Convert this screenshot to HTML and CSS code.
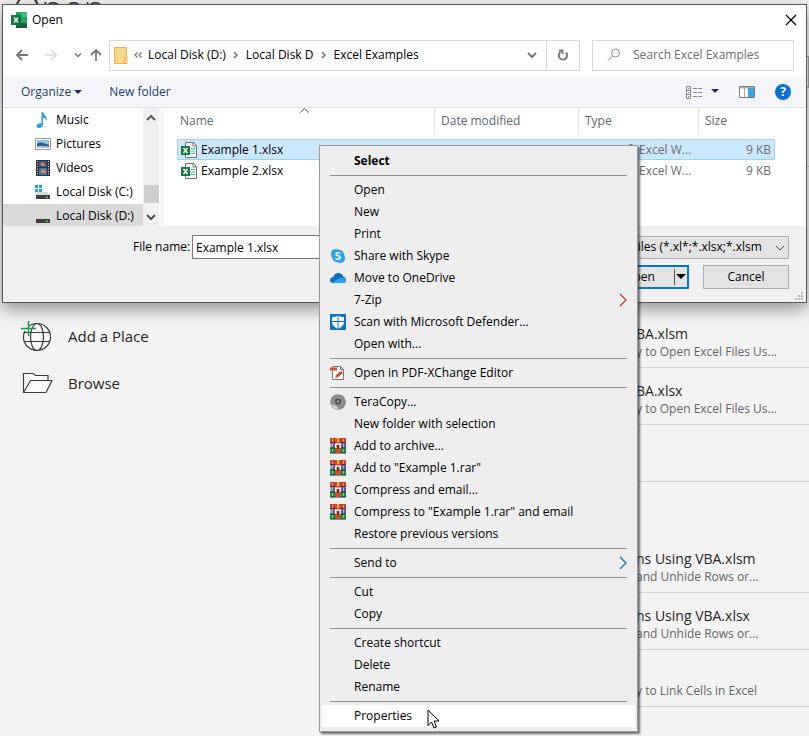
FILE: index.html
```
<!DOCTYPE html>
<html lang="en">
<head>
<meta charset="utf-8">
<title>Open</title>
<link rel="stylesheet" href="styles.css">
</head>
<body>
<svg class="sprite" aria-hidden="true">
  <symbol id="i-excel-file" viewBox="0 0 16 16">
    <path d="M4.500.500h8l3 3v12h-11z" fill="#fff" stroke="#707070"/>
    <path d="M12 .5V4h3.500" fill="none" stroke="#707070"/>
    <path d="M10 6.500h4M10 9h4M10 11.500h4" stroke="#33c481"/>
    <path d="M0 4h9v9H0z" fill="#107c41"/>
    <path d="M2.500 6l4 5M6.500 6l-4 5" stroke="#fff" stroke-width="1.500"/>
  </symbol>
  <symbol id="i-rar" viewBox="0 0 16 16">
    <path d="M0 0h16v4H0z" fill="#c8402c"/>
    <path d="M0 4h16v1.500H0z" fill="#6b1b4c"/>
    <path d="M1 5.500h15V10H1z" fill="#4763b8"/>
    <path d="M0 5.500h1.500V10H0z" fill="#a9b6e0"/>
    <path d="M0 10h16v5H0z" fill="#199048"/>
    <path d="M0 9.500h16v1H0zM0 14.500h16v1H0z" fill="#163a33"/>
    <path d="M2 1h1v3H2zM13 1h1v3h-1zM2 6h1v3H2zM13 6h1v3h-1zM2 11h1v3H2zM13 11h1v3h-1z" fill="#e0b24c"/>
    <path d="M5.500 0h5v15h-5z" fill="#d34a2c"/>
    <path d="M7 0h2v4H7z" fill="#efb540"/>
    <path d="M5 5.500h6V10H9.500V7h-3v3H5z" fill="#f4f1ea"/>
    <path d="M7 7h2v4H7z" fill="#8d2418"/>
  </symbol>
  <symbol id="i-disk" viewBox="0 0 16 16">
    <path d="M3 8h10l2 3H1z" fill="#d6d6d6"/>
    <path d="M1 11h14v4H1z" fill="#3f3f3f"/>
    <path d="M11 12.500h2v1.500h-2z" fill="#3be05a"/>
  </symbol>
  <symbol id="i-more" viewBox="0 0 8 14">
    <path d="M1 1l6 6-6 6" fill="none" stroke="currentColor" stroke-width="1.200"/>
  </symbol>
  <symbol id="i-crumb" viewBox="0 0 6 8">
    <path d="M1 1l3 3-3 3" fill="none" stroke="#707070" stroke-width="1.500"/>
  </symbol>
  <symbol id="i-down" viewBox="0 0 10 8">
    <path d="M1 2l4 4 4-4" fill="none" stroke="currentColor" stroke-width="2"/>
  </symbol>
</svg>

<main class="backstage">
  <section class="places">
    <h1>Open</h1>
    <div class="account-mark"></div>
    <button class="place">
      <svg width="32" height="32" viewBox="0 0 32 32" fill="none" stroke="#3a3a3a" stroke-width="1.200">
        <circle cx="16" cy="17" r="13.500" fill="#fafafa"/>
        <ellipse cx="16" cy="17" rx="6.500" ry="13.500"/>
        <path d="M3.500 12.500h25M3.500 21.500h25"/>
        <path d="M0 4h8v7H0z" fill="#f3f3f3" stroke="none"/>
        <path d="M0 8.500h15M7.500 1v15" stroke="#169a4b" stroke-width="1.500"/>
      </svg>
      <span>Add a Place</span>
    </button>
    <button class="place">
      <svg width="32" height="32" viewBox="0 0 32 32" fill="#fafafa" stroke="#3a3a3a" stroke-width="1.200">
        <path d="M2.500 25V6.500h10l2 2H27v5"/>
        <path d="M2.500 25.500l7-12H31l-6 12z"/>
      </svg>
      <span>Browse</span>
    </button>
  </section>
  <section class="recent">
    <div class="recent-search"></div>
    <div class="recent-head"></div>
    <ul>
      <li><b>BA.xlsm</b><small>y to Open Excel Files Us...</small></li>
      <li><b>BA.xlsx</b><small>y to Open Excel Files Us...</small></li>
      <li></li>
    </ul>
    <ul>
      <li><b>ns Using VBA.xlsm</b><small>and Unhide Rows or...</small></li>
      <li><b>ns Using VBA.xlsx</b><small>and Unhide Rows or...</small></li>
      <li><b></b><small>y to Link Cells in Excel</small></li>
    </ul>
  </section>
</main>

<div class="dialog" role="dialog" aria-label="Open">
  <header class="titlebar">
    <svg width="16" height="16" viewBox="0 0 16 16">
      <path d="M5 0h11v16H5z" fill="#21a366"/>
      <path d="M10 0h6v5h-6z" fill="#33c481"/>
      <path d="M5 5h5v6H5z" fill="#107c41"/>
      <path d="M5 11h11v5H5z" fill="#185c37"/>
      <path d="M0 3h10v10H0z" fill="#0f7a3f"/>
      <path d="M3 5.500l4 5M7 5.500l-4 5" stroke="#fff" stroke-width="1.500"/>
    </svg>
    <span>Open</span>
    <button class="close" aria-label="Close">
      <svg width="12" height="12" viewBox="0 0 12 12"><path d="M1 1l10 10M11 1L1 11" stroke="#000" stroke-width="1.200"/></svg>
    </button>
  </header>

  <nav class="navrow">
    <button class="nav-icon" aria-label="Back"><svg width="14" height="12" viewBox="0 0 14 12" fill="none" stroke="#777" stroke-width="1.800"><path d="M13 6H2M7 1L2 6l5 5"/></svg></button>
    <button class="nav-icon" aria-label="Forward"><svg width="14" height="12" viewBox="0 0 14 12" fill="none" stroke="#d8d8d8" stroke-width="1.600"><path d="M1 6h11M7 1l5 5-5 5"/></svg></button>
    <button class="nav-icon small" aria-label="Recent locations"><svg width="8" height="6"><use href="#i-down"/></svg></button>
    <button class="nav-icon up" aria-label="Up"><svg width="12" height="14" viewBox="0 0 12 14" fill="none" stroke="#777" stroke-width="1.800"><path d="M6 13V2M1 7l5-5 5 5"/></svg></button>
    <div class="address">
      <svg width="14" height="17" viewBox="0 0 14 17"><path d="M.5.500h12v16H.5z" fill="#f6d98b" stroke="#e9b04d"/><path d="M10.500 10.500h2.500v6h-2.500z" fill="#fbe6ae" stroke="#e9a83d"/></svg>
      <svg class="rewind" width="8" height="6" viewBox="0 0 8 6" fill="none" stroke="#707070" stroke-width="1.200"><path d="M3.500.500L1 3l2.500 2.500M7.500.500L5 3l2.500 2.500"/></svg>
      <a href="#">Local Disk (D:)</a>
      <svg width="6" height="8"><use href="#i-crumb"/></svg>
      <a href="#">Local Disk D</a>
      <svg width="6" height="8"><use href="#i-crumb"/></svg>
      <a href="#">Excel Examples</a>
      <button class="history" aria-label="Previous locations"><svg width="10" height="8"><use href="#i-down"/></svg></button>
      <button class="refresh" aria-label="Refresh"><svg width="12" height="12" viewBox="0 0 12 12" fill="none" stroke="#777" stroke-width="1.900"><path d="M9 3.500A4.200 4.200 0 1 1 3.500 3M2 1.500h3.500V5"/></svg></button>
    </div>
    <label class="search">
      <svg width="14" height="14" viewBox="0 0 14 14" fill="none" stroke="#8a8a8a"><circle cx="8.500" cy="5" r="4"/><path d="M5.500 8L1 12.500"/></svg>
      <input type="text" placeholder="Search Excel Examples" aria-label="Search Excel Examples">
    </label>
  </nav>

  <div class="toolbar">
    <button>Organize <i class="tri"></i></button>
    <button>New folder</button>
    <div class="tools">
      <button aria-label="View">
        <svg width="17" height="13" viewBox="0 0 17 13" fill="none" stroke="#8a8a8a"><path d="M.5.500h4v12h-4zM.5 4.500h4M.5 8.500h4"/><path d="M7 2.500h4M12 2.500h4M7 6.500h4M12 6.500h4M7 10.500h4M12 10.500h4"/><path d="M2 2.500h1M2 6.500h1" stroke="#3b82c4"/><path d="M2 10.500h1" stroke="#d0442c"/></svg>
        <i class="tri"></i>
      </button>
      <button aria-label="Preview pane">
        <svg width="16" height="12" viewBox="0 0 16 12"><path d="M.5.500h15v11H.5z" fill="#fff" stroke="#7b7f86"/><path d="M1 1h14v1.500H1z" fill="#a9adb3"/><path d="M9 2h6v9H9z" fill="#39a5e8"/><path d="M5.500 2v9" stroke="#a9adb3"/></svg>
      </button>
      <button aria-label="Help" class="help">?</button>
    </div>
  </div>

  <div class="browser">
    <ul class="tree">
      <li><svg width="16" height="16" viewBox="0 0 16 16"><path d="M6.500 0H8c.5 3 4.500 4 4 9-1-2.500-2-3-4-3.500v7c0 2-2 3.500-4 3.500s-3-1-2.500-2.500 3-2.500 5-2z" fill="#2b9be0"/></svg>Music</li>
      <li><svg width="16" height="16" viewBox="0 0 16 16"><path d="M.5 2.500h15v11H.5z" fill="#fff" stroke="#9a9a9a"/><path d="M2 4h12v8H2z" fill="#8cc3ee"/><path d="M2 8c3-3 6-1 12 1v3H2z" fill="#2d5f94"/><path d="M2 10.500c4-1 8 0 12 0V12H2z" fill="#b9cad6"/></svg>Pictures</li>
      <li><svg width="16" height="16" viewBox="0 0 16 16"><path d="M1 0h14v16H1z" fill="#333"/><path d="M4 1h8v6H4z" fill="#2b58a8"/><path d="M4 8h8v7H4z" fill="#3e75ca"/><path d="M5 4l3-2 3 4H7zM6 10l4-1 1 4H6z" fill="#d98b3a"/><path d="M2.500 1v14M13.500 1v14" stroke="#ddd" stroke-dasharray="1 1.500"/></svg>Videos</li>
      <li><svg width="16" height="16" viewBox="0 0 16 16"><use href="#i-disk"/><path d="M0 1h3v3H0zM4 1h3v3H4zM0 5h3v3H0zM4 5h3v3H4z" fill="#1c9fe6"/></svg>Local Disk (C:)</li>
      <li class="current"><svg width="16" height="16"><use href="#i-disk"/></svg>Local Disk (D:)</li>
    </ul>
    <div class="scroll">
      <svg width="10" height="8" viewBox="0 0 10 8"><path d="M1 6l4-4 4 4" fill="none" stroke="#505050" stroke-width="1.800"/></svg>
      <div class="thumb"></div>
      <svg width="10" height="8"><use href="#i-down"/></svg>
    </div>
    <div class="files">
      <table>
        <thead>
          <tr><th class="c-name">Name<svg class="sort" width="9" height="5" viewBox="0 0 9 5"><path d="M.5 4.500l4-4 4 4" fill="none" stroke="#606060"/></svg></th><th class="c-date">Date modified</th><th class="c-type">Type</th><th class="c-size">Size</th></tr>
        </thead>
        <tbody>
          <tr class="selected"><td><span class="file"><svg width="16" height="16"><use href="#i-excel-file"/></svg>Example 1.xlsx</span></td><td></td><td>Microsoft Excel W...</td><td>9 KB</td></tr>
          <tr><td><span class="file"><svg width="16" height="16"><use href="#i-excel-file"/></svg>Example 2.xlsx</span></td><td></td><td>Microsoft Excel W...</td><td>9 KB</td></tr>
        </tbody>
      </table>
    </div>
  </div>

  <footer class="foot">
    <div class="foot-row">
      <label for="fname">File name:</label>
      <input id="fname" type="text" value="Example 1.xlsx">
      <div class="filter">
        <select aria-label="File type"><option>Excel Files (*.xl*;*.xlsx;*.xlsm</option></select>
        <svg width="10" height="8" viewBox="0 0 10 8"><path d="M1 2l4 4 4-4" fill="none" stroke="#505050"/></svg>
      </div>
    </div>
    <div class="foot-row actions">
      <div class="split"><button>Open</button><button class="drop" aria-label="Open options"><i class="tri"></i></button></div>
      <button class="cancel">Cancel</button>
    </div>
    <svg class="grip" width="8" height="8" viewBox="0 0 8 8" fill="#b8b8b8"><path d="M6 0h2v2H6zM3 3h2v2H3zM6 3h2v2H6zM0 6h2v2H0zM3 6h2v2H3zM6 6h2v2H6z"/></svg>
  </footer>
</div>

<div class="menu" role="menu">
  <button class="default">Select</button>
  <hr>
  <button>Open</button>
  <button>New</button>
  <button>Print</button>
  <button><svg width="16" height="16" viewBox="0 0 16 16"><circle cx="5.500" cy="5.500" r="4.500" fill="#2ea3ea"/><circle cx="10.500" cy="10.500" r="4.500" fill="#2ea3ea"/><circle cx="8" cy="8" r="6.500" fill="#2ea3ea"/><path d="M10.200 5.800C9.500 4.300 6 4.300 6 6.200c0 2 4.200 1.200 4.200 3.400 0 2-3.700 2-4.500.400" fill="none" stroke="#fff" stroke-width="1.500"/></svg>Share with Skype</button>
  <button><svg width="16" height="16" viewBox="0 0 16 16"><path d="M0 10.500C0 8.500 1.500 7 3.300 7 4 4.500 6 3 8.500 3s4 1.500 4.500 3.500c2 .5 3 2 3 3.500 0 2-1.500 3-3 3H3c-1.500 0-3-1-3-2.500z" fill="#0f6cc4"/><path d="M2 13c1-1 6-4.500 8-5 3-.5 6 .5 6 2.500s-1.500 2.500-3 2.500z" fill="#2aa0ea"/></svg>Move to OneDrive</button>
  <button>7-Zip<svg class="more red" width="8" height="14"><use href="#i-more"/></svg></button>
  <button><svg width="16" height="16" viewBox="0 0 16 16"><path d="M0 0h16v16H0z" fill="#0b72d0"/><path d="M8 1.500c2 1.300 4 1.700 6 1.700V8c0 3-3 5.500-6 7-3-1.500-6-4-6-7V3.200c2 0 4-.4 6-1.700z" fill="#fff"/><path d="M8 1v14M2 7.500h12" stroke="#0b72d0"/></svg>Scan with Microsoft Defender...</button>
  <button>Open with...</button>
  <hr>
  <button><svg width="16" height="16" viewBox="0 0 16 16"><path d="M2.500 1.500h8l3 3v10h-11z" fill="#fff" stroke="#777"/><path d="M10.500 1.500v3h3" fill="none" stroke="#777"/><path d="M0 2.500h7v3H0z" fill="#d9482b"/><path d="M5 13l1-3 5-4 2 2-5 4z" fill="#d9482b"/></svg>Open in PDF-XChange Editor</button>
  <hr>
  <button><svg width="16" height="16" viewBox="0 0 16 16"><circle cx="8" cy="8" r="7.800" fill="#858585"/><circle cx="8" cy="7.500" r="5" fill="none" stroke="#a0a0a0"/><circle cx="8" cy="7.500" r="2.800" fill="#4a4a4a"/><circle cx="8" cy="7.500" r="1.200" fill="#aaa"/><path d="M1 10c1 4 5 5.500 8 5l-3-3z" fill="#d0d0d0"/></svg>TeraCopy...</button>
  <button>New folder with selection</button>
  <button><svg width="16" height="16"><use href="#i-rar"/></svg>Add to archive...</button>
  <button><svg width="16" height="16"><use href="#i-rar"/></svg>Add to "Example 1.rar"</button>
  <button><svg width="16" height="16"><use href="#i-rar"/></svg>Compress and email...</button>
  <button><svg width="16" height="16"><use href="#i-rar"/></svg>Compress to "Example 1.rar" and email</button>
  <button>Restore previous versions</button>
  <hr>
  <button>Send to<svg class="more blue" width="8" height="14"><use href="#i-more"/></svg></button>
  <hr>
  <button>Cut</button>
  <button>Copy</button>
  <hr>
  <button>Create shortcut</button>
  <button>Delete</button>
  <button>Rename</button>
  <hr>
  <button class="hover">Properties</button>
  <svg class="cursor" width="13" height="20" viewBox="0 0 13 20"><path d="M1 1v15.500l3.500-3.500 2.500 6 2.500-1-2.500-6H12z" fill="#fff" stroke="#000"/></svg>
</div>
</body>
</html>
```
FILE: styles.css
```
* { box-sizing: border-box; }
body {
  margin: 0;
  height: 100vh;
  overflow: hidden;
  position: relative;
  background: #f3f3f3;
  color: #000;
  font: 12px/16px "Open Sans", "Noto Sans", sans-serif;
}
button, input, select { font: inherit; color: inherit; }
button { border: 0; padding: 0; background: none; text-align: left; }
svg { flex: none; display: block; }
ul { list-style: none; margin: 0; padding: 0; }
a { color: inherit; text-decoration: none; }
.sprite { position: absolute; width: 0; height: 0; }
.tri { display: inline-block; border: 4px solid transparent; border-top: 4px solid #1e2a6b; border-bottom: 0; }

/* Backstage page */
.backstage { display: flex; height: 100%; overflow: hidden; }
.places { width: 600px; flex: none; }
.places h1 { margin: -16px 0 0 13px; height: 48px; font-size: 37px; line-height: 48px; font-weight: 300; color: #333; }
.account-mark { margin: 262px 0 0 37px; width: 9px; height: 8px; background: #2b3192; }
.place { display: flex; align-items: center; gap: 15px; height: 47px; padding-left: 21px; font-size: 15px; color: #262626; }
.account-mark + .place { margin-top: 10px; }
.recent { flex: 1; }
.recent-search { margin-top: 56px; height: 32px; border: 1px solid #a8a8a8; }
.recent-head { height: 79px; border-bottom: 1px solid #c8c8c8; }
.recent ul { padding-top: 54px; }
.recent-head + ul { padding-top: 144px; }
.recent li { height: 57px; padding: 13px 0 7px 36px; border-bottom: 1px solid #d0d0d0; white-space: nowrap; }
.recent b { display: block; height: 20px; font-size: 14px; line-height: 20px; font-weight: 400; color: #262626; }
.recent small { display: block; font-size: 12px; line-height: 16px; color: #666; }

/* File dialog */
.dialog {
  position: absolute; top: 4px; left: 2px; right: 2px;
  background: #fff; border: 1px solid #555;
  box-shadow: 0 6px 16px rgba(0, 0, 0, .4);
}
.titlebar { display: flex; align-items: center; gap: 5px; height: 30px; padding: 0 9px 0 8px; }
.close { margin-left: auto; }
.navrow { display: flex; align-items: center; height: 42px; padding: 5px 12px 7px 12px; color: #777; }
.nav-icon { width: 29px; }
.nav-icon.small { width: 16px; padding-left: 1px; }
.nav-icon.up { width: 20px; padding-left: 1px; }
.address, .search { display: flex; align-items: center; height: 31px; border: 1px solid #d9d9d9; color: #000; }
.address { flex: 1; gap: 7px; padding-left: 4px; }
.address .rewind { margin: 0 -1px; }
.history { margin-left: auto; padding: 0 2px; color: #777; }
.refresh { align-self: stretch; width: 33px; display: grid; place-items: center; border-left: 1px solid #d9d9d9; }
.search { width: 202px; margin-left: 12px; padding-left: 14px; gap: 12px; }
.search input { flex: 1; min-width: 0; border: 0; padding: 0; outline: 0; background: none; }
.search input::placeholder { color: #6d6d6d; opacity: 1; }
.toolbar { display: flex; align-items: center; gap: 27px; height: 31px; padding: 0 15px 0 18px; background: #f4f6f9; border-bottom: 1px solid #e3e5e8; color: #1e3a6b; }
.toolbar .tri { margin: 0 0 2px; }
.tools { display: flex; align-items: center; gap: 20px; margin-left: auto; }
.tools button { display: flex; align-items: center; gap: 8px; }
.tools .help { width: 16px; height: 16px; justify-content: center; border-radius: 8px; background: #0a6fd0; color: #fff; font-weight: 700; }

.browser { display: flex; height: 118px; overflow: hidden; }
.tree { width: 140px; flex: none; }
.tree li { display: flex; align-items: center; gap: 5px; height: 24px; padding-left: 32px; white-space: nowrap; }
.tree .current { background: #d9d9d9; }
.scroll { display: flex; flex-direction: column; align-items: center; width: 16px; padding: 6px 0 5px; background: #f0f0f0; color: #505050; }
.thumb { width: 15px; height: 18px; margin: auto 0 10px; background: #cdcdcd; }
.files { flex: 1; margin-left: 2px; padding: 0 31px 0 15px; border-left: 1px solid #ededed; }
table { width: 100%; table-layout: fixed; border-collapse: separate; border-spacing: 0; color: #6d6d6d; }
th { position: relative; height: 26px; padding: 0 0 0 6px; text-align: left; font-weight: 400; color: #5b6670; border-left: 1px solid #e5e5e5; }
.c-name { padding-left: 3px; border-left: 0; }
.c-date { width: 144px; }
.c-type { width: 120px; }
.c-size { width: 77px; }
.sort { position: absolute; top: 0; left: 123px; }
tbody::before { content: ""; display: block; height: 5px; }
td { height: 21px; padding: 0 4px 0 5px; white-space: nowrap; border: 0 solid #99d1ff; }
td:first-child { padding-left: 4px; color: #000; }
td:last-child { text-align: right; }
.file { display: flex; align-items: center; gap: 4px; }
.selected td { background: #cce8ff; border-width: 1px 0; }
.selected td:first-child { border-left-width: 1px; padding-left: 3px; }
.selected td:last-child { border-right-width: 1px; padding-right: 3px; }

.foot { position: relative; padding: 9px 17px 13px 130px; background: #f0f0f0; }
.foot-row { display: flex; align-items: center; height: 24px; }
.foot-row label { width: 59px; flex: none; }
.foot-row > input { flex: 1; min-width: 0; height: 24px; padding: 0 3px; border: 1px solid #7a7a7a; background: #fff; }
.filter { position: relative; width: 194px; margin-left: 8px; }
.filter select { appearance: none; width: 100%; height: 23px; padding: 0 16px 0 4px; border: 1px solid #adadad; border-radius: 0; background: #e3e3e3; }
.filter svg { position: absolute; right: 4px; top: 8px; }
.actions { justify-content: flex-end; gap: 14px; margin-top: 6px; }
.split { display: flex; align-items: center; width: 86px; height: 24px; border: 2px solid #0078d7; background: #e3e3e3; }
.split button { flex: 1; text-align: center; }
.split .drop { flex: none; width: 13px; border-left: 1px solid #555; }
.split .tri { border-width: 5px 5px 0; border-top-color: #000; vertical-align: 2px; }
.cancel { width: 86px; height: 24px; border: 1px solid #adadad; background: #e3e3e3; text-align: center; }
.grip { position: absolute; right: 3px; bottom: 2px; }

/* Context menu */
.menu {
  position: absolute; top: 145px; left: 319px; width: 319px;
  padding: 4px 2px; background: #eee; border: 1px solid #999;
  box-shadow: 2px 2px 2px rgba(0, 0, 0, .55);
}
.menu button { position: relative; display: flex; align-items: center; width: 100%; height: 22px; padding-left: 32px; white-space: nowrap; }
.menu button > svg:not(.more) { margin: 0 8px 0 -24px; }
.menu hr { height: 1px; margin: 3px 8px; border: 0; background: #919191; }
.menu .default { font-weight: 700; }
.menu .hover { background: #fff; }
.menu .more { margin: 0 8px 0 auto; }
.red { color: #b5382a; }
.blue { color: #0b6fa8; }
.cursor { position: absolute; left: 107px; bottom: 2px; }
```
